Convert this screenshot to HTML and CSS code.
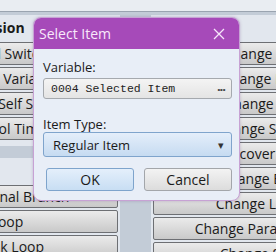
FILE: index.html
```html
<!DOCTYPE html>
<html lang="en">
<head>
  <meta charset="UTF-8" />
  <title>Select Item</title>
  <link rel="stylesheet" href="styles.css">
</head>
<body>
  <div class="topbar"></div>

  <div class="board">
    <div class="col col-left">
      <div class="group">
        <div class="head">Game Progression</div>
        <div class="cmd">Control Switches</div>
        <div class="cmd">Control Variables</div>
        <div class="cmd">Control Self Switch</div>
        <div class="cmd">Control Timer</div>
      </div>
      <div class="group">
        <div class="head">Flow Control</div>
        <div class="cmd">Conditional Branch</div>
        <div class="cmd">Loop</div>
        <div class="cmd">Break Loop</div>
      </div>
    </div>
    <div class="col col-right">
      <div class="group">
        <div class="head">Actor</div>
        <div class="cmd">Change HP</div>
        <div class="cmd">Change MP</div>
        <div class="cmd">Change TP</div>
        <div class="cmd">Change State</div>
        <div class="cmd">Recover All</div>
        <div class="cmd">Change EXP</div>
        <div class="cmd">Change Level</div>
        <div class="cmd">Change Parameters</div>
        <div class="cmd">Change Skill</div>
      </div>
    </div>
  </div>

  <div class="dialog">
    <div class="titlebar">
      <span class="title">Select Item</span>
      <svg class="close" width="12" height="12" viewBox="0 0 12 12">
        <path d="M1 1 L11 11 M11 1 L1 11" stroke="#f6e6fa" stroke-width="1.3" fill="none"/>
      </svg>
    </div>
    <div class="dbody">
      <div class="label">Variable:</div>
      <div class="picker">
        <span class="mono">0004 Selected Item</span>
        <span class="dots">···</span>
      </div>
      <div class="label label-gap">Item Type:</div>
      <div class="select">
        <span>Regular Item</span>
        <span class="arrow">▾</span>
      </div>
      <div class="actions">
        <div class="btn btn-default">OK</div>
        <div class="btn">Cancel</div>
      </div>
    </div>
  </div>
</body>
</html>
```

FILE: styles.css
```css
html, body { margin: 0; padding: 0; }
body {
  width: 276px; height: 252px; overflow: hidden; position: relative;
  background: #c3ccd7;
  font-family: "Open Sans", "Noto Sans", sans-serif; font-size: 14px; color: #1a1a1a;
}

.topbar { height: 11px; background: #e9edf2; border-bottom: 1px solid #9aa4b0; }

.board { display: flex; gap: 31px; margin-top: 3px; }
.col { flex: none; }
.col-left { width: 226px; margin-left: -106px; }
.col-right { width: 216px; }
.group { background: #e2e7ee; padding: 0 2px 6px; }
.group + .group { margin-top: 12px; }
.head { height: 25px; line-height: 25px; font-weight: bold; padding-left: 2px; white-space: nowrap; }
.cmd {
  height: 21px; line-height: 21px; margin-top: 2px; text-align: center; white-space: nowrap;
  border: 1px solid #6d6f73; border-radius: 2px;
  background: linear-gradient(#ebebeb, #c9c9c9);
}

.dialog {
  position: absolute; left: 33px; top: 17px; width: 205px; height: 182px;
  border: 1px solid #c7a2d4; border-radius: 8px; overflow: hidden;
  background: #e8eef7;
  box-shadow: 0 0 3px rgba(120, 80, 140, 0.35);
}
.titlebar {
  height: 31px; background: #a64ab9; color: #f8e9fb;
  display: flex; align-items: center; justify-content: space-between; padding: 0 14px 0 5px;
}
.title { font-size: 14px; }
.dbody { padding: 10px 7px 8px 9px; }
.label { font-size: 13px; line-height: 16px; height: 16px; }
.label-gap { margin-top: 17px; }
.picker {
  margin-top: 3px; height: 19px; display: flex; align-items: center; justify-content: space-between;
  padding: 0 6px 0 7px; border: 1px solid #a5a9ae; border-radius: 3px;
  background: linear-gradient(#f4f4f4, #e4e4e4);
}
.mono { font-family: "Liberation Mono", "DejaVu Sans Mono", monospace; font-size: 11.5px; color: #222; }
.dots { font-size: 13px; font-weight: bold; color: #444; letter-spacing: -1px; }
.select {
  margin-top: 0; height: 23px; display: flex; align-items: center; justify-content: space-between;
  padding: 0 7px 0 9px; border: 1px solid #7fa4cc; border-radius: 3px;
  background: linear-gradient(#e4eefa, #c6dbf1);
  font-size: 13px;
}
.arrow { font-size: 11px; color: #333; }
.actions { display: flex; justify-content: flex-end; gap: 10px; margin-top: 11px; }
.btn {
  width: 86px; height: 21px; line-height: 21px; text-align: center;
  border: 1px solid #a3a6aa; border-radius: 3px;
  background: linear-gradient(#f3f3f3, #dcdcdc);
}
.btn-default { border-color: #7ea4cc; background: linear-gradient(#e4effb, #c8def3); }
```
